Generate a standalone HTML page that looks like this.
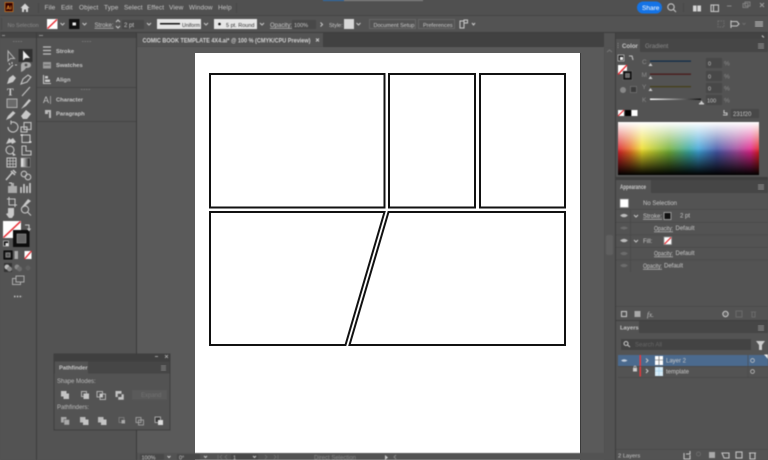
<!DOCTYPE html>
<html><head><meta charset="utf-8"><style>
html,body{margin:0;padding:0;background:#535353;width:768px;height:460px;overflow:hidden}
svg{position:absolute;left:0;top:0;display:block}
text{font-family:"Liberation Sans",sans-serif;font-size:6.5px;fill:#c8c8c8}
.ui{filter:blur(.45px)}
.b{font-weight:bold}
.d{fill:#8a8a8a}
.ic{fill:none;stroke:#c4c4c4;stroke-width:1.1}
.f{fill:#c8c8c8}
</style></head><body>
<svg width="768" height="460" viewBox="0 0 768 460" xmlns="http://www.w3.org/2000/svg">
<defs>
<linearGradient id="hue" x1="0" x2="1" y1="0" y2="0">
<stop offset="0" stop-color="#d8202a"/><stop offset=".08" stop-color="#e66a24"/><stop offset=".17" stop-color="#eedd2a"/><stop offset=".36" stop-color="#74b038"/><stop offset=".5" stop-color="#3aa8a0"/><stop offset=".57" stop-color="#3ea4d8"/><stop offset=".7" stop-color="#4658a8"/><stop offset=".84" stop-color="#a04a9c"/><stop offset=".94" stop-color="#e0248a"/><stop offset="1" stop-color="#e0201c"/>
</linearGradient>
<linearGradient id="wh" x1="0" x2="0" y1="0" y2="1"><stop offset="0" stop-color="#fff"/><stop offset=".58" stop-color="#fff" stop-opacity="0"/></linearGradient>
<linearGradient id="bk" x1="0" x2="0" y1="0" y2="1"><stop offset=".5" stop-color="#000" stop-opacity="0"/><stop offset="1" stop-color="#000"/></linearGradient>
<linearGradient id="kg" x1="0" x2="1" y1="0" y2="0"><stop offset="0" stop-color="#fff"/><stop offset="1" stop-color="#111"/></linearGradient>
</defs>

<!-- canvas -->
<rect x="137" y="47" width="467" height="413" fill="#5a5a5a"/>
<rect x="195" y="53" width="385" height="407" fill="#fff"/>
<g fill="#fff" stroke="#111" stroke-width="2">
<rect x="210" y="74" width="174.500" height="133.500"/>
<rect x="389" y="74" width="86" height="133.500"/>
<rect x="480" y="74" width="85" height="133.500"/>
<path d="M210 212H384.500L345.500 345H210Z"/>
<path d="M388.500 212H565V345H349.500Z"/>
</g>
<rect x="580" y="53" width="1" height="407" fill="#3a3a3a"/>

<g class="ui">
<!-- top bars -->
<rect width="768" height="15" fill="#505050"/>
<rect y="15" width="768" height="1" fill="#464646"/>
<rect y="16" width="768" height="16" fill="#535353"/>
<rect x="323" y="0" width="100" height="1" fill="#8a8a8a"/>
<rect x="323" y="0" width="21" height="1" fill="#2a6db0"/>
<rect y="32" width="768" height="1" fill="#3e3e3e"/>

<!-- app logo / home -->
<rect x="5" y="2.500" width="8" height="9" fill="#300" stroke="#c9701a" stroke-width=".8"/>
<text x="6.200" y="9.500" style="font-size:5.500px;fill:#f09a30" class="b">Ai</text>
<path d="M20.500 8L25 3.500 29.500 8H28V12H26V9.500H24V12H22V8Z" fill="#d4d4d4"/>
<rect x="38" y="3" width="1" height="10" fill="#484848"/>
<g style="letter-spacing:.1px">
<text x="44.500" y="9.500">File</text><text x="61" y="9.500">Edit</text><text x="79" y="9.500">Object</text>
<text x="104" y="9.500">Type</text><text x="124" y="9.500">Select</text><text x="147" y="9.500">Effect</text>
<text x="169" y="9.500">View</text><text x="189" y="9.500">Window</text><text x="218" y="9.500">Help</text>
</g>
<rect x="236" y="3" width="1" height="10" fill="#484848"/>

<!-- share etc -->
<rect x="637" y="1.500" width="25" height="12" rx="6" fill="#1473e6"/>
<text x="642" y="10" style="fill:#fff;font-size:6.500px">Share</text>
<circle cx="671" cy="7" r="3.200" class="ic"/><path d="M673.500 9.500L676 12" class="ic"/>
<rect x="683" y="3" width="1" height="9" fill="#484848"/>
<rect x="693" y="5.500" width="8" height="6" fill="#d4d4d4"/><rect x="696.500" y="5.500" width=".8" height="6" fill="#505050"/>
<rect x="711" y="5" width="7.500" height="6.500" class="ic"/><path d="M713.500 5V11.500" class="ic"/>
<path d="M727 6H731.500" stroke="#8a8a8a" fill="none"/>
<rect x="743" y="3.500" width="5" height="4" fill="none" stroke="#8a8a8a" stroke-width=".8"/><rect x="745" y="2" width="5" height="4" fill="none" stroke="#8a8a8a" stroke-width=".8"/>
<path d="M760 3L764 7M764 3L760 7" stroke="#9a9a9a" fill="none"/>

<!-- options bar -->
<rect x="1" y="18" width="1" height="12" fill="#484848"/>
<text x="7.500" y="27" style="font-size:5.500px" class="d">No Selection</text>
<rect x="47" y="19" width="10.500" height="10" fill="#fff"/><path d="M47.500 28.500L57 19.500" stroke="#e8242c" stroke-width="1.300"/>
<path d="M60.500 23L62.500 25 64.500 23" class="ic"/>
<rect x="69" y="19" width="10.500" height="10" fill="#111"/><rect x="72.500" y="22.500" width="3.500" height="3" fill="#eee"/>
<path d="M82.500 23L84.500 25 86.500 23" class="ic"/>
<text x="94.500" y="27" style="text-decoration:underline;font-size:6px">Stroke:</text>
<path d="M116 22L118 20 120 22M116 26L118 28 120 26" class="ic" stroke-width=".8"/>
<rect x="122" y="20" width="22" height="9" fill="#484848"/>
<text x="124" y="27" style="font-size:6px">2 pt</text>
<path d="M147 23L149 25 151 23" class="ic"/>
<rect x="157" y="19" width="44" height="10" fill="#e6e6e6"/>
<rect x="160" y="23" width="20" height="1.500" fill="#111"/>
<text x="182" y="27" textLength="18" lengthAdjust="spacingAndGlyphs" style="font-size:5.500px;fill:#333">Uniform</text>
<path d="M204 23L206 25 208 23" class="ic"/>
<rect x="214" y="19" width="43" height="10" fill="#e6e6e6"/>
<circle cx="219.500" cy="24" r="1.300" fill="#111"/>
<text x="226" y="27" style="font-size:5.500px;fill:#333">5 pt. Round</text>
<path d="M260 23L262 25 264 23" class="ic"/>
<text x="270" y="27" style="text-decoration:underline;font-size:6px">Opacity:</text>
<rect x="292" y="20" width="24" height="9" fill="#484848"/>
<text x="294" y="27" style="font-size:5.500px">100%</text>
<path d="M320.500 22.500L322.500 24.500 320.500 26.500" class="ic"/>
<text x="329" y="27" style="font-size:5.500px">Style:</text>
<rect x="344" y="19" width="10" height="10" fill="#d8d8d8"/>
<path d="M356.500 23L358.500 25 360.500 23" class="ic"/>
<rect x="369.500" y="19.500" width="46" height="9" fill="none" stroke="#6c6c6c" stroke-width=".8"/>
<text x="373.500" y="27" style="font-size:5.500px">Document Setup</text>
<rect x="418.500" y="19.500" width="36" height="9" fill="none" stroke="#6c6c6c" stroke-width=".8"/>
<text x="423" y="27" style="font-size:5.500px">Preferences</text>
<rect x="460" y="21" width="4" height="7" class="ic" stroke-width=".8"/><rect x="464" y="20" width="3.500" height="3" class="ic" stroke-width=".8"/>
<path d="M472 23L473.500 25 475 23" class="ic"/>
<rect x="718" y="21" width="6" height="6" fill="none" stroke="#6e6e6e" stroke-dasharray="1.500 1"/>
<path d="M731 20.500V28M731 21.500H737L739 24 737 26H731" class="ic"/>
<path d="M742.500 23L744 24.500 745.500 23" stroke="#6e6e6e" fill="none"/>
<path d="M755 22H763M755 24H763M755 26H763" class="ic" stroke-width=".9"/>

<!-- left columns -->
<rect x="0" y="33" width="36" height="427" fill="#535353"/>
<rect x="36" y="33" width="1" height="427" fill="#3c3c3c"/>
<rect x="37" y="33" width="100" height="427" fill="#535353"/>
<rect x="136" y="33" width="1" height="427" fill="#3c3c3c"/>
<rect x="0" y="33" width="36" height="5" fill="#454545"/>
<rect x="37" y="33" width="99" height="5" fill="#454545"/>
<path d="M2 35.500H5M39 35.500H43" stroke="#aaa" stroke-width=".8"/>
<path d="M13 41.500H22M82 41.500H91" stroke="#777" stroke-dasharray="1.500 1"/>
<path d="M81 89.500H91" stroke="#777" stroke-dasharray="1.500 1"/>

<!-- panel dock items -->
<path d="M43 47H51M43 50.500H51M43 54H51" stroke="#c0c0c0" stroke-width="1.200"/>
<text x="56" y="53" class="b" style="font-size:5.800px">Stroke</text>
<rect x="43" y="62" width="8" height="6.500" fill="#999"/><path d="M44 65H50" stroke="#666"/>
<text x="56" y="67" class="b" style="font-size:5.800px">Swatches</text>
<path d="M43.500 75V83.500H51" class="ic"/><rect x="45" y="76" width="3" height="2.500" class="f"/><rect x="45" y="79.500" width="5" height="2.500" class="f"/>
<text x="56" y="81.500" class="b" style="font-size:5.800px">Align</text>
<rect x="37" y="87" width="99" height="1" fill="#454545"/>
<rect x="37" y="121" width="99" height="1" fill="#454545"/>
<text x="43" y="103" style="font-size:9px;fill:#c4c4c4">A</text><path d="M50.500 96V104" stroke="#aaa" stroke-width=".8"/>
<text x="56" y="101.500" class="b" style="font-size:5.800px">Character</text>
<path d="M45 110H51V118H49V112H48V114H45Z" fill="#bbb"/>
<text x="56" y="115.500" class="b" style="font-size:5.800px">Paragraph</text>

<!-- tools -->
<rect x="18.500" y="49" width="14" height="13" fill="#303030"/>
<path d="M8 51V61L10.500 58.500H14.500Z" fill="none" stroke="#b4b4b4" stroke-width="1"/>
<path d="M23 50.500V60.500L25.500 58H30Z" fill="#eee"/>
<path d="M7 71L13 65M12 62V64M15 65H17M9 63L10 65" class="ic"/>
<path d="M21 65Q21 62 26 62Q31 62 31 65Q31 68 26 68Q24 71 21 72Z" fill="#aaa"/><circle cx="26" cy="65" r="1.400" fill="#535353"/>
<path d="M7 84L9 78 13 75 16 78 13 82Z" class="f"/>
<path d="M21 84L23 79 28 75 31 77 27 82Z" class="ic"/>
<text x="7" y="95.500" class="b" style="font-size:10px;fill:#d0d0d0;font-family:'Liberation Serif',serif">T</text>
<path d="M22 96L30 87" class="ic"/>
<rect x="7" y="99" width="10" height="8.500" fill="#6a6a6a" stroke="#b0b0b0"/>
<path d="M21 109L24 105 29 99 31 100.500 26 106Z" class="f"/>
<path d="M6 120L8 116 13 111 15.500 113 10.500 118Z" class="f"/>
<path d="M21 116L26 110 31 114 27 119H23Z" class="f"/>
<path d="M8 127A5 5 0 1 0 11 122.500M11 120.500V124.500" class="ic"/>
<rect x="21" y="127" width="6" height="5" class="ic"/><rect x="24" y="122.500" width="7" height="7" class="ic"/>
<path d="M6 144L9 138 13 142ZM13 138L16 142 12 144 10 140Z" class="f"/>
<rect x="22" y="135" width="8" height="7.500" class="ic"/><path d="M20.500 135H23M29 142H31.500" stroke="#ddd" stroke-width="1.500"/>
<circle cx="10" cy="150" r="4" class="ic"/><path d="M12 152L16 155 13 156Z" class="f"/>
<path d="M22 146V155H31V151H26V146Z" class="ic"/>
<rect x="7" y="158" width="9" height="9" class="ic"/><path d="M10 158V167M13 158V167M7 161H16M7 164H16" stroke="#c4c4c4" stroke-width=".7"/>
<rect x="21" y="158" width="9" height="9" fill="url(#kg)" stroke="#aaa" stroke-width=".5"/>
<path d="M6 180L12 173M11 171L15 175M13 170L16 173" stroke="#c8c8c8" stroke-width="1.500" fill="none"/>
<circle cx="24" cy="174" r="2.800" class="ic"/><circle cx="28" cy="177" r="2.800" class="ic"/>
<path d="M8 193V186H11V183H14V186H17V193Z" fill="#aaa"/><path d="M9 183H12" stroke="#ddd"/>
<path d="M21 193V187M24 193V184M27 193V186M30 193V183" stroke="#ccc" stroke-width="1.600" fill="none"/>
<path d="M9 197V205H17M7 199H15V207" class="ic"/>
<path d="M21 208L28 199 31 201 24 207Z" class="f"/>
<path d="M8 213V208H14V215L12 218H9L6 214Z" fill="#c8c8c8"/>
<circle cx="25" cy="209.500" r="3.600" class="ic"/><path d="M27.500 212L31 215.500" class="ic"/>

<!-- fill / stroke -->
<rect x="3" y="221" width="18" height="17" fill="#fff"/><path d="M3.500 237.500L20.500 221.500" stroke="#e8242c" stroke-width="1.500"/>
<rect x="13" y="230" width="16.500" height="17" fill="#0c0c0c"/><rect x="17" y="234" width="9" height="9" fill="#666" stroke="#999" stroke-width=".6"/>
<path d="M25 225H29V230M27.500 228.500L29 230.500 30.500 228.500" class="ic" stroke-width=".9"/>
<rect x="3.500" y="241" width="5" height="5" fill="#111" stroke="#ccc" stroke-width=".7"/><rect x="5.500" y="243" width="3" height="3" fill="#ddd"/>
<rect x="4" y="251" width="8" height="8" fill="#222" stroke="#000"/><rect x="6" y="253" width="4" height="4" fill="#555" stroke="#aaa" stroke-width=".6"/>
<rect x="14.500" y="251" width="7" height="8" fill="#aaa"/><rect x="18" y="251" width="3.500" height="8" fill="#555"/>
<rect x="24.500" y="251" width="7" height="8" fill="#fff"/><path d="M24.500 259L31.500 251" stroke="#e8242c" stroke-width="1.300"/>
<rect x="4" y="263" width="8" height="9" fill="#333"/><circle cx="7" cy="267" r="2.500" fill="#bbb"/><circle cx="9.500" cy="269" r="2.500" fill="#888"/>
<circle cx="17" cy="267" r="2.500" fill="#888"/><circle cx="19.500" cy="269" r="2.500" fill="#6c6c6c"/>
<circle cx="28" cy="268" r="2.500" fill="#5f5f5f"/>
<rect x="12.500" y="278.500" width="8" height="6" fill="none" stroke="#b4b4b4" stroke-width=".9"/><rect x="16" y="276" width="8" height="6" fill="#535353" stroke="#b4b4b4" stroke-width=".9"/>
<path d="M14 296.500H22.500" stroke="#c8c8c8" stroke-width="1.500" stroke-dasharray="1.500 1.300"/>

<!-- doc tab -->
<rect x="137" y="33" width="467" height="14" fill="#414141"/>
<rect x="137" y="33" width="186" height="14" fill="#535353"/>
<text x="142.500" y="42.500" class="b" textLength="168" lengthAdjust="spacingAndGlyphs" style="font-size:6.100px;fill:#d4d4d4">COMIC BOOK TEMPLATE 4X4.ai* @ 100 % (CMYK/CPU Preview)</text>
<path d="M316 38.500L319 41.500M319 38.500L316 41.500" stroke="#ccc" fill="none"/>

<!-- canvas scrollbar -->
<rect x="604" y="47" width="11" height="413" fill="#535353"/>
<path d="M607 52L609.500 50 612 52" stroke="#777" fill="none"/>
<rect x="606" y="235" width="7" height="20" fill="#5f5f5f" rx="2"/>

<!-- status bar -->
<rect x="137" y="453" width="467" height="7" fill="#535353"/>
<rect x="140" y="454" width="24" height="6" fill="#484848"/><text x="141.500" y="459.500" style="font-size:5.500px">100%</text>
<path d="M167.500 456L169 457.500 170.500 456" class="ic" stroke-width=".8"/>
<rect x="177" y="454" width="23" height="6" fill="#484848"/><text x="179" y="459.500" style="font-size:5.500px">0°</text>
<path d="M204 456L205.500 457.500 207 456" class="ic" stroke-width=".8"/>
<path d="M218 455V459M222 455L220 457 222 459M227 455L225 457 227 459" stroke="#777" fill="none" stroke-width=".7"/>
<rect x="231" y="454" width="27" height="6" fill="#484848"/><text x="233" y="459.500" style="font-size:5.500px">1</text>
<path d="M253 456L254.500 457.500 256 456" class="ic" stroke-width=".8"/>
<path d="M265 455L267 457 265 459M274 455L276 457 274 459M278 455V459" stroke="#777" fill="none" stroke-width=".7"/>
<text x="314" y="459.500" style="font-size:6px" class="d">Direct Selection</text>
<path d="M385 455L388 457.500 385 460" fill="#ccc"/><path d="M396 455L394 457 396 459" stroke="#888" fill="none"/>

<!-- right dock -->
<rect x="615" y="33" width="153" height="427" fill="#535353"/>
<rect x="615" y="33" width="1" height="427" fill="#3c3c3c"/>
<rect x="616" y="33" width="152" height="6" fill="#434343"/>
<path d="M762 35.500L764 37.500 762 36" stroke="#bbb"/>
<rect x="616" y="39" width="152" height="13" fill="#464646"/>
<rect x="616" y="39" width="24" height="13" fill="#535353"/>
<text x="622" y="48" class="b" style="font-size:6.100px">Color</text>
<text x="645" y="48" class="d" style="font-size:6.100px">Gradient</text>
<path d="M618 43V48" stroke="#888" stroke-dasharray="1 1"/>
<path d="M758 44H764M758 46H764M758 48H764" stroke="#aaa" stroke-width=".8"/>

<rect x="618" y="55" width="6" height="6" fill="#222" stroke="#ccc" stroke-width=".7"/><rect x="620" y="57" width="3" height="3" fill="#eee"/>
<path d="M629 56H632L633 60" class="ic" stroke-width=".9"/>
<rect x="618" y="65" width="9" height="9" fill="#fff"/><path d="M618 74.500L627 65" stroke="#e8242c" stroke-width="1.300"/>
<rect x="623" y="71" width="9" height="9" fill="#111" stroke="#777" stroke-width=".5"/><rect x="625.500" y="73.500" width="4" height="4" fill="#666" stroke="#999" stroke-width=".5"/>
<circle cx="623" cy="90" r="3" fill="#888"/>
<rect x="630.500" y="86.500" width="6" height="6" fill="#3a3a3a" stroke="#777" stroke-width=".7"/>
<g style="font-size:6px">
<text x="642" y="64" class="d">C</text><text x="641.500" y="77" class="d">M</text><text x="642" y="89" class="d">Y</text><text x="642" y="102" class="d">K</text>
</g>
<rect x="650" y="60.500" width="41" height="1.300" fill="#112d4a"/><rect x="650" y="73.500" width="41" height="1.300" fill="#4a1a1a"/><rect x="650" y="86" width="41" height="1.300" fill="#45401a"/><rect x="650" y="98.500" width="51" height="1.500" fill="url(#kg)"/>
<path d="M650.500 63L648.500 66H652.500ZM650.500 76L648.500 79H652.500ZM650.500 88L648.500 91H652.500Z" fill="#ccc"/>
<path d="M701.500 100.500L699.500 103.500H703.500Z" fill="#ccc" /><rect x="699" y="103" width="5" height="1.500" fill="#ccc"/>
<g fill="#484848"><rect x="706" y="58" width="16" height="10"/><rect x="706" y="71" width="16" height="10"/><rect x="706" y="83" width="16" height="10"/><rect x="706" y="95" width="16" height="10"/></g>
<text x="708" y="65.500" style="font-size:5.500px">0</text><text x="708" y="78.500" style="font-size:5.500px">0</text><text x="708" y="90.500" style="font-size:5.500px">0</text><text x="707" y="102.500" style="font-size:5.500px">100</text>
<text x="724" y="65.500" class="d">%</text><text x="724" y="78.500" class="d">%</text><text x="724" y="90.500" class="d">%</text><text x="724" y="102.500" class="d">%</text>

<rect x="618" y="110" width="6" height="6" fill="#fff"/><path d="M618 116L624 110" stroke="#e8242c" stroke-width="1.100"/>
<rect x="625" y="110" width="6" height="6" fill="#000"/><rect x="631.500" y="110" width="6" height="6" fill="#fff"/>
<path d="M724 110V113L727 113V115H723" class="ic" stroke-width=".9"/>
<rect x="731" y="109" width="28" height="9" fill="#484848"/>
<text x="733" y="116" style="font-size:6px">231f20</text>

<rect x="618" y="122" width="141" height="53" fill="url(#hue)"/>
<rect x="618" y="122" width="141" height="53" fill="url(#wh)"/>
<rect x="618" y="122" width="141" height="53" fill="url(#bk)"/>
<rect x="616" y="177" width="152" height="3" fill="#3e3e3e"/>

<!-- appearance -->
<rect x="616" y="180" width="152" height="13" fill="#464646"/>
<rect x="616" y="180" width="35" height="13" fill="#535353"/>
<text x="620" y="189" class="b" textLength="26" lengthAdjust="spacingAndGlyphs" style="font-size:6px">Appearance</text>
<path d="M758 185H764M758 187H764M758 189H764" stroke="#aaa" stroke-width=".8"/>
<rect x="620" y="199" width="8.500" height="8.500" fill="#fff" stroke="#888" stroke-width=".6"/>
<text x="643" y="205" style="font-size:6px">No Selection</text>
<rect x="616" y="209" width="152" height=".7" fill="#484848"/>
<path d="M630.500 209.500V272" stroke="#484848" stroke-width=".7"/>
<path d="M620 215.500Q624 212 628 215.500Q624 219 620 215.500Z" fill="#bbb"/>
<path d="M634 215L636 217 638 215" class="ic" stroke-width=".8"/>
<text x="643" y="218" style="font-size:6px;text-decoration:underline">Stroke:</text>
<rect x="664" y="212.500" width="7" height="7" fill="#111" stroke="#999"/>
<text x="680" y="217.500" style="font-size:6px">2 pt</text>
<rect x="616" y="222" width="152" height=".7" fill="#484848"/>
<path d="M620 228Q624 225 628 228Q624 231 620 228Z" fill="#6c6c6c"/>
<text x="654" y="230.500" textLength="19" lengthAdjust="spacingAndGlyphs" style="font-size:6px;text-decoration:underline">Opacity:</text>
<text x="675.500" y="230" style="font-size:6px">Default</text>
<rect x="616" y="234.500" width="152" height=".7" fill="#484848"/>
<path d="M620 240.500Q624 237 628 240.500Q624 244 620 240.500Z" fill="#bbb"/>
<path d="M634 240L636 242 638 240" class="ic" stroke-width=".8"/>
<text x="643" y="243" style="font-size:6px">Fill:</text>
<rect x="664" y="237" width="7.500" height="7.500" fill="#fff" stroke="#999" stroke-width=".7"/><path d="M664.500 244L671 237.500" stroke="#e8242c" stroke-width="1.200"/>
<rect x="616" y="247" width="152" height=".7" fill="#484848"/>
<path d="M620 253.500Q624 250 628 253.500Q624 257 620 253.500Z" fill="#6c6c6c"/>
<text x="654" y="255.500" textLength="19" lengthAdjust="spacingAndGlyphs" style="font-size:6px;text-decoration:underline">Opacity:</text>
<text x="675.500" y="255" style="font-size:6px">Default</text>
<rect x="616" y="259.500" width="152" height=".7" fill="#484848"/>
<path d="M620 265.500Q624 262 628 265.500Q624 269 620 265.500Z" fill="#6c6c6c"/>
<text x="643" y="268" textLength="19" lengthAdjust="spacingAndGlyphs" style="font-size:6px;text-decoration:underline">Opacity:</text>
<text x="664" y="267.500" style="font-size:6px">Default</text>
<rect x="616" y="306" width="152" height=".7" fill="#484848"/>
<rect x="621.500" y="311.500" width="5" height="5" class="ic"/>
<rect x="634.500" y="311" width="6" height="6" fill="#aaa"/>
<text x="647" y="317" style="font-family:'Liberation Serif',serif;font-style:italic;font-size:7px">fx.</text>
<circle cx="725.500" cy="314" r="2.700" fill="#666" stroke="#ccc"/>
<rect x="736" y="311" width="6" height="6" fill="none" stroke="#6a6a6a"/>
<path d="M751 312H756M752 312V317H755V312" stroke="#6a6a6a" fill="none"/>
<rect x="616" y="320" width="152" height="1" fill="#3e3e3e"/>

<!-- layers -->
<rect x="616" y="321" width="152" height="12" fill="#464646"/>
<rect x="616" y="321" width="23" height="12" fill="#535353"/>
<text x="620" y="329.500" class="b" style="font-size:5.800px">Layers</text>
<path d="M758 326H764M758 328H764M758 330H764" stroke="#aaa" stroke-width=".8"/>
<rect x="621" y="339" width="130" height="11" fill="#434343"/>
<circle cx="626" cy="343.500" r="2" class="ic"/><path d="M627.500 345L630 347" class="ic"/>
<text x="635" y="346.500" style="font-size:6px;fill:#666">Search All</text>
<path d="M756 341H765L762 345V350H759V345Z" fill="#ccc"/>
<rect x="618" y="355" width="150" height="11" fill="#4b6a8e"/>
<rect x="618" y="366" width="150" height=".8" fill="#484848"/>
<rect x="618" y="377" width="150" height=".8" fill="#484848"/>
<path d="M764 354.500H768V359Z" fill="#eee"/>
<path d="M621 360.500Q624 358 627.500 360.500Q624 363 621 360.500Z" fill="#c4d0de"/>
<rect x="633" y="368" width="4" height="3.500" fill="#ccc"/><path d="M634 368V367A1 1 0 0 1 636 367V368" stroke="#ccc" fill="none" stroke-width=".7"/>
<rect x="639.500" y="355" width="1.500" height="11" fill="#e8383c"/><rect x="639.500" y="366.500" width="1.500" height="10" fill="#e8383c"/>
<path d="M646 358.500L648 360.500 646 362.500M646 369L648 371 646 373" class="ic" stroke-width=".9"/>
<rect x="655" y="356" width="8" height="9" fill="#fff"/><path d="M659 356V365M655 360H663" stroke="#555" stroke-width=".6"/>
<rect x="655" y="367" width="8" height="9" fill="#d7ecf8"/><path d="M659 367V376M655 371H663" stroke="#a8d4ee" stroke-width=".7"/>
<text x="666" y="362.500" style="font-size:6px">Layer 2</text>
<text x="666" y="373.500" style="font-size:6px">template</text>
<circle cx="752.500" cy="360.500" r="1.900" fill="none" stroke="#ccc" stroke-width=".7"/>
<circle cx="752.500" cy="371.500" r="1.900" fill="none" stroke="#ccc" stroke-width=".7"/>
<path d="M748 355V377" stroke="#484848" stroke-width=".6"/>
<rect x="616" y="449" width="152" height=".7" fill="#484848"/>
<text x="618" y="457.500" style="font-size:5.800px">2 Layers</text>
<path d="M684 453V459H690V455M686 454H690V451" class="ic" stroke-width=".9"/>
<circle cx="698.500" cy="454" r="2" fill="none" stroke="#6a6a6a"/>
<rect x="709" y="452" width="6" height="6" fill="#aaa"/>
<path d="M722 453H729V458H724Z" class="ic" stroke-width=".9"/>
<rect x="736" y="452" width="6" height="6" class="ic" stroke-width=".9"/>
<path d="M749 453H756M750 453V459H755V453" class="ic" stroke-width=".9"/>

<!-- pathfinder floating -->
<rect x="54" y="354" width="116" height="76" fill="#535353" stroke="#3a3a3a" stroke-width=".8"/>
<rect x="54.500" y="354.500" width="115" height="7" fill="#3f3f3f"/>
<rect x="54.500" y="361.500" width="115" height="12" fill="#464646"/>
<rect x="55" y="361.500" width="33" height="12" fill="#535353"/>
<path d="M155 356.500H158M165 355L168 358M168 355L165 358" stroke="#bbb" stroke-width=".7" fill="none"/>
<text x="59" y="369.500" class="b" style="font-size:5.800px">Pathfinder</text>
<path d="M161 366H166M161 368H166M161 370H166" stroke="#999" stroke-width=".8"/>
<text x="57" y="383" style="font-size:6px;fill:#bbb">Shape Modes:</text>
<g fill="#c4c4c4">
<rect x="61" y="391" width="5.500" height="5.500"/><rect x="63.500" y="393.500" width="5.500" height="5.500"/>
</g>
<rect x="81.500" y="391.500" width="5" height="5" fill="none" stroke="#bbb" stroke-width=".9"/><rect x="83.500" y="393.500" width="5.500" height="5.500" fill="#c4c4c4"/>
<rect x="97" y="391.500" width="5.500" height="5.500" fill="none" stroke="#bbb" stroke-width=".9"/><rect x="100" y="394" width="5.500" height="5.500" fill="none" stroke="#bbb" stroke-width=".9"/><rect x="100" y="394" width="2.500" height="3" fill="#ccc"/>
<rect x="115.500" y="391" width="6" height="6" fill="#c4c4c4"/><rect x="118" y="394" width="6" height="6" fill="#c4c4c4" stroke="#535353" stroke-width=".5"/><rect x="118" y="394" width="3.500" height="3" fill="#535353"/>
<rect x="132" y="390" width="35" height="9.500" fill="#5a5a5a"/>
<text x="141" y="397" style="font-size:6px;fill:#727272">Expand</text>
<text x="57" y="409" style="font-size:6px;fill:#bbb">Pathfinders:</text>
<rect x="61" y="417" width="5.500" height="5.500" fill="#aaa"/><rect x="64" y="419.500" width="5.500" height="5.500" fill="#aaa" stroke="#535353" stroke-width=".5"/>
<rect x="80" y="417" width="5.500" height="5.500" fill="#bbb"/><rect x="83" y="419.500" width="5.500" height="5.500" fill="#c4c4c4"/>
<rect x="98" y="417" width="5.500" height="5.500" fill="#bbb"/><rect x="101" y="419.500" width="5.500" height="5.500" fill="#c4c4c4"/>
<rect x="119" y="417.500" width="5" height="5" fill="none" stroke="#888" stroke-width=".7"/><rect x="121.500" y="420" width="3.500" height="3.500" fill="#aaa"/>
<rect x="136" y="417.500" width="5" height="5" fill="none" stroke="#aaa" stroke-width=".8"/><rect x="138.500" y="420" width="5" height="5" fill="none" stroke="#aaa" stroke-width=".8"/>
<rect x="155" y="417" width="5.500" height="5.500" fill="#3a3a3a" stroke="#ccc" stroke-width=".7"/><rect x="158" y="420" width="5" height="5" fill="#ddd"/>
</g>
</svg>
</body></html>
